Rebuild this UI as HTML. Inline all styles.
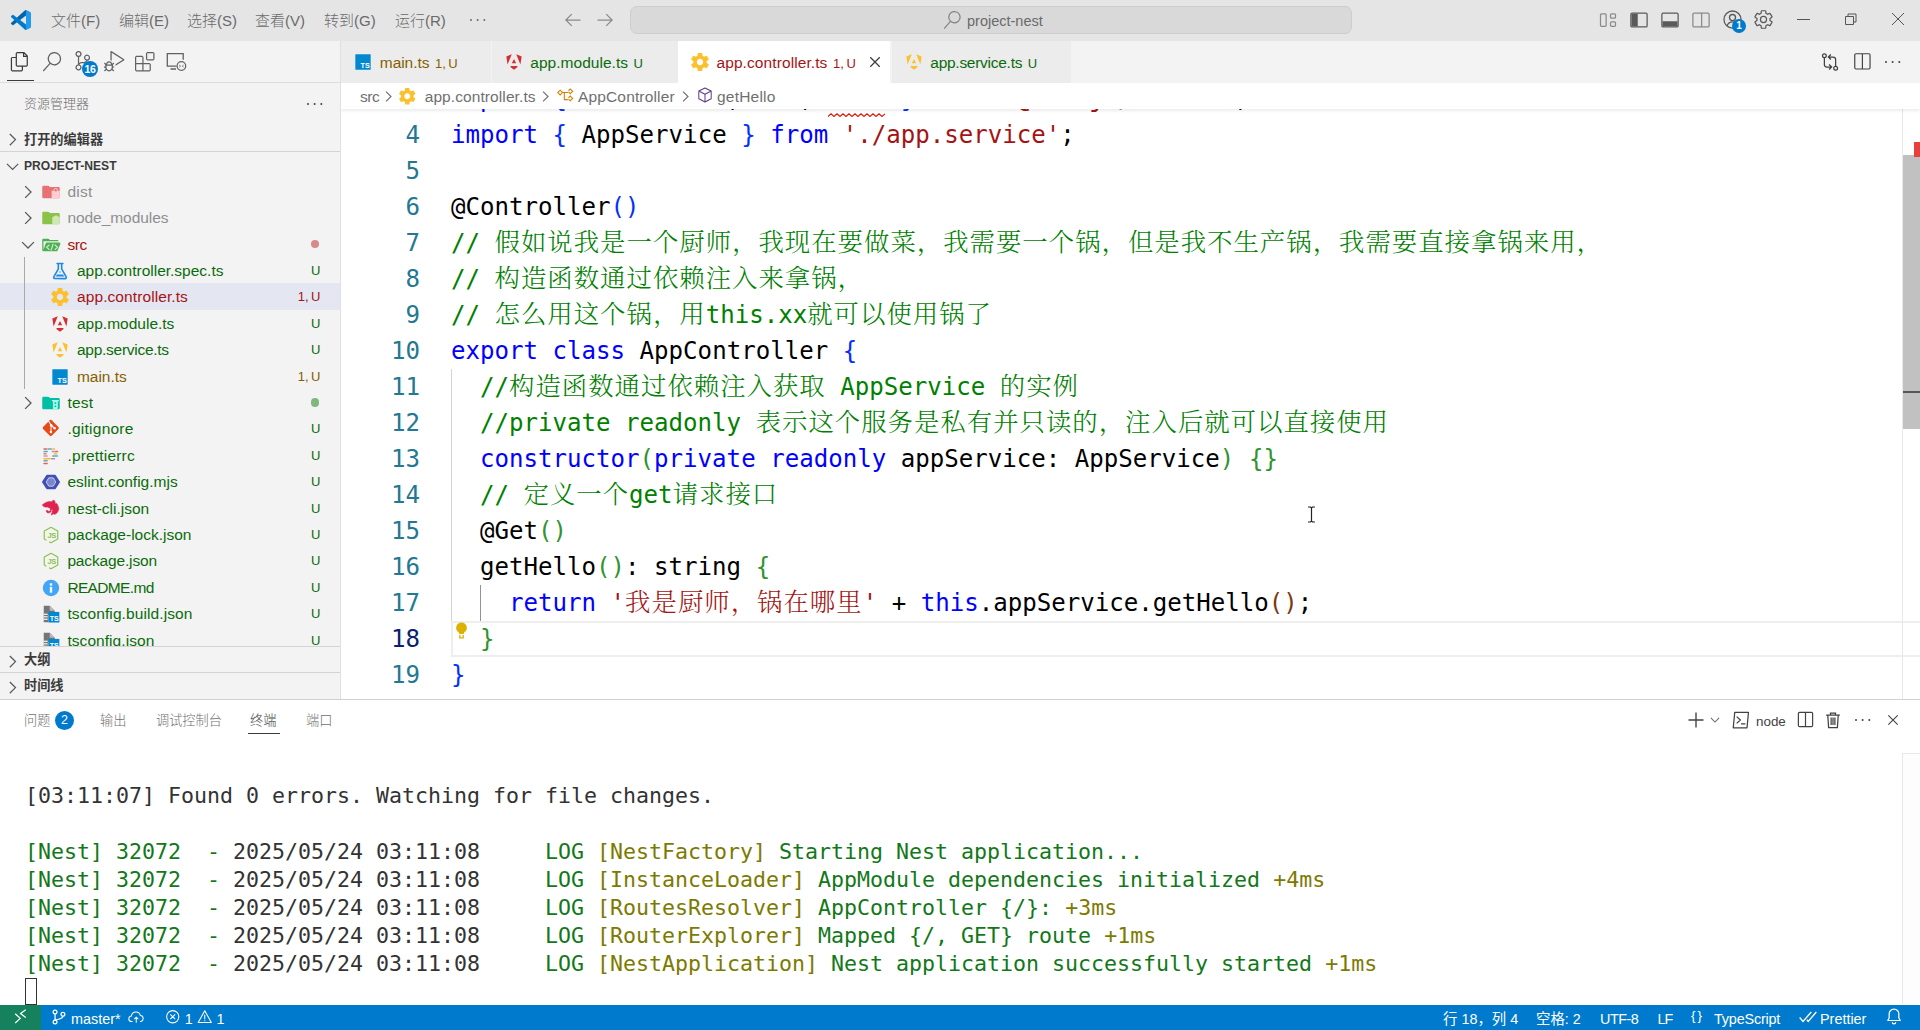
<!DOCTYPE html>
<html lang="zh-CN">
<head>
<meta charset="utf-8">
<title>app.controller.ts - project-nest - Visual Studio Code</title>
<style>
*{box-sizing:border-box;margin:0;padding:0}
html,body{width:1920px;height:1030px;overflow:hidden;background:#fff}
body{position:relative;font-family:"Liberation Sans","Noto Sans CJK SC",sans-serif;font-size:15px;color:#3b3b3b}
.abs{position:absolute}
svg{display:block}
/* ---------- title bar ---------- */
#titlebar{position:absolute;left:0;top:0;width:1920px;height:41px;background:#e5e5e5}
#titlebar .menu{font-weight:300;position:absolute;top:0;height:41px;line-height:41px;font-size:15px;color:#6a6a6a;white-space:nowrap}
#cmd{position:absolute;left:630px;top:6px;width:722px;height:28px;border:1px solid #cdcdcd;border-radius:7px;background:#d9d9d9}
#cmd span{position:absolute;left:336px;top:0;line-height:28.5px;font-size:14.5px;color:#6a6a6a}
/* ---------- side bar ---------- */
#sidebar{position:absolute;left:0;top:41px;width:341px;height:659px;background:#f3f3f3;border-right:1px solid #e0e0e0;overflow:hidden}
#actbar{position:absolute;left:0;top:0;width:340px;height:42px;border-bottom:1px solid #dcdcdc}
.sbtitle{font-weight:300;position:absolute;left:24px;top:53px;font-size:13px;color:#6f6f6f;line-height:20px}
.sechead{position:absolute;left:0;width:340px;height:27px;border-top:1px solid #d4d4d4;font-weight:bold;font-size:13.2px;color:#3b3b3b;line-height:25px;padding-left:24px;white-space:nowrap}
.sechead svg{position:absolute;left:2.500px;top:4.500px}
.row{position:absolute;left:0;width:340px;height:26.4px;line-height:26px;font-size:15.5px;white-space:nowrap}
.row .lbl{position:absolute;top:1px}
.row .bdg{position:absolute;right:19.500px;top:1px;font-size:13px;text-align:right;word-spacing:-1px}
.row .ico{position:absolute;top:4px}
.row .chev{position:absolute;top:4px}
.row.sel{background:#e4e6f1}
.dot{position:absolute;right:21px;top:9px;width:8.500px;height:8.500px;border-radius:50%}
.iguide{position:absolute;width:1px;background:#a9a9a9}
#tree{position:absolute;left:0;top:0;width:340px;height:605px;overflow:hidden}
.g{color:#0b6b0b}.r{color:#a51414}.y{color:#855f00}.ig{color:#8e8e90}
/* ---------- editor ---------- */
#editor{position:absolute;left:341px;top:41px;width:1579px;height:659px;background:#fff;overflow:hidden}
#tabs{position:absolute;left:0;top:0;width:1579px;height:42px;background:#f3f3f3}
.tab{position:absolute;top:0;height:42px;background:#ececec;font-size:15.5px;line-height:41px;white-space:nowrap}
.tab.act{background:#fff}
.tab .ico{position:absolute;top:11px}
.tab .lbl{position:absolute;top:1px}
.tab .bdg{margin-left:5.500px;font-size:13px;word-spacing:-1px}
#crumbs{position:absolute;left:0;top:42px;width:1579px;height:26px;background:#fff;font-size:15.5px;color:#707070;line-height:26px;white-space:nowrap;z-index:3;box-shadow:0 2px 3px rgba(0,0,0,.08)}
#crumbs span{position:absolute;top:1px}
#code{position:absolute;left:0;top:0;width:1579px;font-family:"DejaVu Sans Mono","Liberation Mono","Noto Serif CJK SC",monospace;font-size:24.1px;line-height:36px;color:#000;white-space:pre}
.ln{position:absolute;left:0;height:36px;width:1579px}
.ln .no{position:absolute;left:0;width:79px;text-align:right;color:#237893}
.ln .no.cur{color:#0b216f}
.ln .tx{position:absolute;left:110px}
.k{color:#0000ff}.s{color:#a31515}.c{color:#008000}.b1{color:#0431fa}.b2{color:#319331}.b3{color:#7b3814}
.cj{font-family:"Noto Serif CJK SC",serif;font-size:25.4px;letter-spacing:1px;line-height:0;font-weight:300}
/* ---------- panel ---------- */
#panel{position:absolute;left:0;top:699px;width:1920px;height:306px;background:#fff;border-top:1px solid #d0d0d0;overflow:hidden}
#panel .pt{font-weight:300;position:absolute;top:11px;font-size:13.2px;color:#6f6f6f;line-height:20px;white-space:nowrap}
#term{position:absolute;left:25px;top:82px;font-family:"DejaVu Sans Mono","Liberation Mono",monospace;font-size:21.6px;line-height:28px;color:#333;white-space:pre}
.tg{color:#12781a}.ty{color:#7d7a00}
/* ---------- status bar ---------- */
#status{position:absolute;left:0;top:1005px;width:1920px;height:25px;background:#007acc;color:#fff;font-size:14.4px;line-height:29px;white-space:nowrap}
#status span{position:absolute;top:0}
</style>
</head>
<body>
<!-- TITLEBAR -->
<div id="titlebar">
  <span class="menu" style="left:51px">文件(F)</span>
  <span class="menu" style="left:119px">编辑(E)</span>
  <span class="menu" style="left:187px">选择(S)</span>
  <span class="menu" style="left:255px">查看(V)</span>
  <span class="menu" style="left:324px">转到(G)</span>
  <span class="menu" style="left:395px">运行(R)</span>
  <span class="abs" style="left:468.7px;top:17.8px"><svg width="17.3" height="4" viewBox="0 0 17.3 4"><circle cx="2" cy="2" r="1.0" fill="#6a6a6a"/><circle cx="8.65" cy="2" r="1.0" fill="#6a6a6a"/><circle cx="15.30" cy="2" r="1.0" fill="#6a6a6a"/></svg></span>
  <div id="cmd"><span>project-nest</span></div>
  <!-- vscode logo -->
<span class="abs" style="left:11px;top:10px"><svg width="20" height="20" viewBox="0 0 100 100"><path fill="#0065a9" d="M96.500 10.800L75.900.9a6.200 6.200 0 0 0-7.100 1.200L1.300 63.600a4.200 4.200 0 0 0 0 6.200l5.500 5a4.200 4.200 0 0 0 5.300.2L93.300 13.400c2.700-2.100 6.700-.1 6.700 3.300v-.2a6.200 6.200 0 0 0-3.500-5.700z"/><path fill="#007acc" d="M96.500 89.200l-20.600 9.900a6.200 6.200 0 0 1-7.100-1.200L1.300 36.400a4.200 4.200 0 0 1 0-6.200l5.500-5a4.200 4.200 0 0 1 5.300-.2l81.200 61.600c2.700 2.100 6.700.1 6.700-3.300v.2a6.200 6.200 0 0 1-3.500 5.700z"/><path fill="#1f9cf0" d="M75.900 99.100a6.200 6.200 0 0 1-7.100-1.200c2.300 2.300 6.200.7 6.200-2.600V4.700c0-3.300-3.900-4.900-6.200-2.600A6.200 6.200 0 0 1 75.900.9l20.600 9.900a6.200 6.200 0 0 1 3.500 5.600v67.200a6.200 6.200 0 0 1-3.500 5.600z"/></svg></span>
<!-- nav arrows -->
<span class="abs" style="left:563px;top:10px"><svg width="20" height="20" viewBox="0 0 16 16"><path fill="none" stroke="#8a8a8a" stroke-width="1" d="M14 8H2.500M7 3.300L2.300 8 7 12.700"/></svg></span>
<span class="abs" style="left:595px;top:10px"><svg width="20" height="20" viewBox="0 0 16 16"><path fill="none" stroke="#8a8a8a" stroke-width="1" d="M2 8h11.500M9 3.300L13.700 8 9 12.700"/></svg></span>
<!-- search icon in command center -->
<span class="abs" style="left:943px;top:11px"><svg width="18" height="18" viewBox="0 0 24 24"><path fill="#808080" d="M15.250 0a8.250 8.250 0 0 0-6.180 13.720L1 22.880l1.120 1 8.050-9.120A8.251 8.251 0 1 0 15.250.010V0zm0 15a6.750 6.750 0 1 1 0-13.500 6.750 6.750 0 0 1 0 13.500z"/></svg></span>
<!-- layout controls -->
<span class="abs" style="left:1598px;top:10px"><svg width="20" height="20" viewBox="0 0 16 16"><g fill="none" stroke="#8a8a8a" stroke-width="1"><rect x="2" y="3" width="4.500" height="10" rx=".8"/><rect x="10" y="3" width="4" height="3.500" rx=".8"/><rect x="10" y="9.500" width="4" height="3.500" rx=".8"/></g></svg></span>
<span class="abs" style="left:1629px;top:10px"><svg width="20" height="20" viewBox="0 0 16 16"><rect x="1.500" y="2.500" width="13" height="11" rx="1" fill="none" stroke="#5a5a5a" stroke-width="1"/><rect x="2" y="3" width="5" height="10" fill="#5a5a5a"/></svg></span>
<span class="abs" style="left:1660px;top:10px"><svg width="20" height="20" viewBox="0 0 16 16"><rect x="1.500" y="2.500" width="13" height="11" rx="1" fill="none" stroke="#5a5a5a" stroke-width="1"/><rect x="2" y="9" width="12" height="4" fill="#5a5a5a"/></svg></span>
<span class="abs" style="left:1691px;top:10px"><svg width="20" height="20" viewBox="0 0 16 16"><path fill="none" stroke="#8a8a8a" stroke-width="1" d="M2.500 2.500h11a1 1 0 0 1 1 1v9a1 1 0 0 1-1 1h-11a1 1 0 0 1-1-1v-9a1 1 0 0 1 1-1zM8.500 2.500v11"/></svg></span>
<span class="abs" style="left:1722px;top:9px"><svg width="21" height="21" viewBox="0 0 16 16"><g fill="none" stroke="#5a5a5a" stroke-width="1"><circle cx="8" cy="8" r="6.500"/><circle cx="8" cy="6.500" r="2.300"/><path d="M3.800 12.800c.8-2 2.300-3 4.200-3s3.400 1 4.200 3"/></g></svg></span>
<span class="abs" style="left:1732px;top:19px;width:14px;height:14px;border-radius:7px;background:#007acc;color:#fff;font-size:10px;font-weight:bold;line-height:14px;text-align:center">1</span>
<span class="abs" style="left:1753px;top:9px"><svg width="21" height="21" viewBox="0 0 24 24"><path fill="none" stroke="#5a5a5a" stroke-width="1.400" d="M19.430 12.980c.040-.320.070-.640.070-.980s-.030-.660-.070-.980l2.110-1.650c.190-.150.240-.420.120-.640l-2-3.460c-.120-.220-.390-.300-.610-.220l-2.490 1c-.520-.400-1.080-.730-1.690-.980l-.380-2.650C14.460 2.180 14.250 2 14 2h-4c-.250 0-.460.180-.490.420l-.380 2.650c-.610.250-1.170.590-1.690.980l-2.490-1c-.230-.090-.490 0-.610.220l-2 3.460c-.130.220-.070.490.120.640l2.110 1.650c-.040.320-.070.650-.070.980s.030.660.070.980l-2.110 1.650c-.190.150-.240.420-.120.640l2 3.460c.120.220.390.300.610.220l2.490-1c.520.400 1.080.730 1.690.980l.380 2.650c.030.240.240.420.490.420h4c.250 0 .460-.180.490-.420l.380-2.650c.610-.250 1.170-.590 1.690-.980l2.490 1c.230.090.490 0 .610-.220l2-3.460c.120-.220.070-.490-.120-.640l-2.110-1.650zM12 15.500c-1.930 0-3.500-1.570-3.500-3.500s1.570-3.500 3.500-3.500 3.500 1.570 3.500 3.500-1.570 3.500-3.500 3.500z"/></svg></span>
<!-- window controls -->
<span class="abs" style="left:1797px;top:18.500px;width:13px;height:1px;background:#555"></span>
<span class="abs" style="left:1844px;top:12px"><svg width="14" height="14" viewBox="0 0 14 14"><path fill="none" stroke="#555" stroke-width="1" d="M1.500 4.500h8v8h-8zM4 4.500V2h8v8H9.500"/></svg></span>
<span class="abs" style="left:1891px;top:12px"><svg width="14" height="14" viewBox="0 0 14 14"><path fill="none" stroke="#555" stroke-width="1" d="M1 1l12 12M13 1L1 13"/></svg></span>

</div>
<!-- SIDEBAR -->
<div id="sidebar">
  <div id="actbar"><span class="abs" style="left:10px;top:11px"><svg width="19.5" height="19.5" viewBox="0 0 24 24"><path fill="#3b3b3b" d="M17.5 0h-9L7 1.5V6H2.500L1 7.500v15.070L2.500 24h12.070L16 22.570V18h4.700l1.300-1.430V4.500L17.500 0zm0 2.120l2.380 2.380H17.500V2.120zm-3 20.380h-12v-15H7v9.070L8.500 18h6v4.500zm6-6h-12v-15H16V6h4.500v10.500z"/></svg></span>
<span class="abs" style="left:42px;top:11px"><svg width="19.500" height="19.500" viewBox="0 0 24 24"><path fill="#616161" d="M15.250 0a8.250 8.250 0 0 0-6.180 13.720L1 22.880l1.120 1 8.050-9.120A8.251 8.251 0 1 0 15.250.010V0zm0 15a6.750 6.750 0 1 1 0-13.500 6.750 6.750 0 0 1 0 13.500z"/></svg></span>
<span class="abs" style="left:73px;top:10px"><svg width="19.500" height="19.500" viewBox="0 0 24 24"><path fill="#616161" d="M21.007 8.222A3.738 3.738 0 0 0 15.045 5.200a3.737 3.737 0 0 0 1.156 6.583 2.988 2.988 0 0 1-2.668 1.670h-2.990a4.456 4.456 0 0 0-2.989 1.165V7.400a3.737 3.737 0 1 0-1.494 0v9.117a3.776 3.776 0 1 0 1.816.099 2.990 2.990 0 0 1 2.668-1.667h2.990a4.484 4.484 0 0 0 4.223-3.039 3.736 3.736 0 0 0 3.250-3.687zM4.565 3.738a2.242 2.242 0 1 1 4.484 0 2.242 2.242 0 0 1-4.484 0zm4.484 16.441a2.242 2.242 0 1 1-4.484 0 2.242 2.242 0 0 1 4.484 0zm8.221-9.715a2.242 2.242 0 1 1 0-4.485 2.242 2.242 0 0 1 0 4.485z"/></svg></span>
<span class="abs" style="left:82px;top:20px;width:16px;height:16px;border-radius:8px;background:#007acc;color:#fff;font-size:10.500px;font-weight:bold;line-height:16px;text-align:center;letter-spacing:-.3px">16</span>
<span class="abs" style="left:104px;top:10px"><svg width="20.500" height="20.500" viewBox="0 0 24 24"><path fill="#616161" d="M10.940 13.500l-1.320 1.320a3.730 3.730 0 0 0-7.240 0L1.060 13.500 0 14.560l1.720 1.720-.22.220V18H0v1.500h1.500v.080c.077.489.214.966.410 1.420L0 22.940 1.060 24l1.650-1.650A4.308 4.308 0 0 0 6 24a4.310 4.310 0 0 0 3.290-1.650L10.940 24 12 22.940 10.090 21c.198-.464.336-.951.410-1.450v-.100H12V18h-1.500v-1.500l-.220-.220L12 14.560l-1.060-1.060zM6 13.500a2.250 2.250 0 0 1 2.250 2.250h-4.500A2.250 2.250 0 0 1 6 13.500zm3 6a3.330 3.330 0 0 1-3 3 3.330 3.330 0 0 1-3-3v-2.250h6v2.250zm14.760-9.900v1.260L13.500 17.370V15.600l8.500-5.370L9 2v9.460a5.070 5.070 0 0 0-1.500-.720V.630L8.640 0l15.120 9.600z"/></svg></span>
<span class="abs" style="left:135px;top:11px"><svg width="19.500" height="19.500" viewBox="0 0 24 24"><path fill="#616161" d="M13.500 1.500L15 0h7.500L24 1.500V9l-1.500 1.500H15L13.500 9V1.500zm1.500 0V9h7.500V1.500H15zM0 15V6l1.500-1.500H9L10.500 6v7.500H18l1.500 1.500v7.500L18 24H1.500L0 22.500V15zm9-1.500V6H1.500v7.500H9zM9 15H1.500v7.500H9V15zm1.500 7.500H18V15h-7.500v7.500z"/></svg></span>
<span class="abs" style="left:166px;top:11px"><svg width="21" height="20" viewBox="0 0 21 20"><path fill="none" stroke="#616161" stroke-width="1.300" d="M10.500 14.200H1.300V1.600h15.900v6.200M4.500 17h5.500"/><circle cx="15.400" cy="14" r="4.300" fill="none" stroke="#616161" stroke-width="1.200"/><path fill="none" stroke="#616161" stroke-width=".9" d="M13.300 13.100l1.200 1-1.200 1M17.500 13.100l-1.200 1 1.200 1"/></svg></span>
<span class="abs" style="left:7px;top:38.500px;width:27px;height:1.500px;background:#3b3b3b"></span>
</div>
  <div class="sbtitle">资源管理器</div>
  <div id="tree"><div class="row" style="top:136.8px"><span class="chev" style="left:18px"><svg width="20" height="20" viewBox="0 0 16 16" ><path fill="none" stroke="#5a5a5a" stroke-width="1.050" d="M5.700 3.300L10.400 8l-4.700 4.700"/></svg></span><span class="ico" style="left:40.8px"><svg width="20" height="20" viewBox="0 0 32 32" ><path fill="#e57373" d="M13.844 7.536l-1.288-1.072A2 2 0 0 0 11.276 6H4a2 2 0 0 0-2 2v16a2 2 0 0 0 2 2h24a2 2 0 0 0 2-2V10a2 2 0 0 0-2-2H15.124a2 2 0 0 1-1.28-.464Z"/><path fill="#ffcdd2" d="M17 14h13v10a2 2 0 0 1-2 2H17z"/><path fill="none" stroke="#ffcdd2" stroke-width="1.6" d="M21 14v-1.2a2.5 2.5 0 0 1 5 0V14"/><rect x="22" y="13" width="3" height="2" fill="#e57373"/></svg></span><span class="lbl ig" style="left:67.4px;letter-spacing:0.24px">dist</span></div>
<div class="row" style="top:163.2px"><span class="chev" style="left:18px"><svg width="20" height="20" viewBox="0 0 16 16" ><path fill="none" stroke="#5a5a5a" stroke-width="1.050" d="M5.700 3.300L10.400 8l-4.700 4.700"/></svg></span><span class="ico" style="left:40.8px"><svg width="20" height="20" viewBox="0 0 32 32" ><path fill="#8bc34a" d="M13.844 7.536l-1.288-1.072A2 2 0 0 0 11.276 6H4a2 2 0 0 0-2 2v16a2 2 0 0 0 2 2h24a2 2 0 0 0 2-2V10a2 2 0 0 0-2-2H15.124a2 2 0 0 1-1.28-.464Z"/><path fill="#dcedc8" d="M24 11.5l6 3.4V26H18v-11.1z" opacity=".85"/></svg></span><span class="lbl ig" style="left:67.4px;letter-spacing:-0.05px">node_modules</span></div>
<div class="row" style="top:189.6px"><span class="chev" style="left:17.500px"><svg width="20" height="20" viewBox="0 0 16 16" ><path fill="none" stroke="#5a5a5a" stroke-width="1.050" d="M3.300 5.700L8 10.400l4.700-4.700"/></svg></span><span class="ico" style="left:40.8px"><svg width="20" height="20" viewBox="0 0 32 32" ><path fill="#4caf50" d="M28.967 12H9.442a2 2 0 0 0-1.898 1.368L4 24V10h24a2 2 0 0 0-2-2H15.124a2 2 0 0 1-1.28-.464l-1.288-1.072A2 2 0 0 0 11.276 6H4a2 2 0 0 0-2 2v16a2 2 0 0 0 2 2h22l4.805-11.212A2 2 0 0 0 28.967 12Z"/><path fill="none" stroke="#c8e6c9" stroke-width="2" d="M13.5 15.5l-4.5 4 4.5 4M22 15.5l4.5 4-4.5 4M19.5 14l-3.5 11"/></svg></span><span class="lbl r" style="left:67.4px;letter-spacing:-0.42px">src</span><span class="dot" style="background:#d88a8a"></span></div>
<div class="row" style="top:216.0px"><span class="ico" style="left:50.4px"><svg width="20" height="20" viewBox="0 0 24 24" ><path fill="none" stroke="#1e88e5" stroke-width="1.9" stroke-linejoin="round" stroke-linecap="round" d="M8.500 3h7M10 3.300v6.200L4.600 19a1.400 1.400 0 0 0 1.200 2.100h12.400a1.400 1.400 0 0 0 1.200-2.100L14 9.500V3.300"/><path fill="#1e88e5" d="M8.300 16.200h7.400l1.300 2.500H7z"/><circle cx="12" cy="13.300" r=".9" fill="#1e88e5"/></svg></span><span class="lbl g" style="left:77.0px">app.controller.spec.ts</span><span class="bdg g">U</span></div>
<div class="row sel" style="top:242.4px"><span class="ico" style="left:50.4px"><svg width="20" height="20" viewBox="0.9 0.9 22.2 22.2" ><path fill="#fbc02d" d="M19.43 12.98c.04-.32.07-.64.07-.98s-.03-.66-.07-.98l2.11-1.65c.19-.15.24-.42.12-.64l-2-3.46c-.12-.22-.39-.3-.61-.22l-2.49 1c-.52-.4-1.08-.73-1.69-.98l-.38-2.65C14.46 2.18 14.25 2 14 2h-4c-.25 0-.46.18-.49.42l-.38 2.65c-.61.25-1.17.59-1.69.98l-2.49-1c-.23-.09-.49 0-.61.22l-2 3.46c-.13.22-.07.49.12.64l2.11 1.65c-.04.32-.07.65-.07.98s.03.66.07.98l-2.11 1.65c-.19.15-.24.42-.12.64l2 3.46c.12.22.39.3.61.22l2.49-1c.52.4 1.08.73 1.69.98l.38 2.65c.03.24.24.42.49.42h4c.25 0 .46-.18.49-.42l.38-2.65c.61-.25 1.17-.59 1.69-.98l2.49 1c.23.09.49 0 .61-.22l2-3.46c.12-.22.07-.49-.12-.64l-2.11-1.65zM12 15.5c-1.93 0-3.5-1.57-3.5-3.5s1.57-3.5 3.5-3.5 3.5 1.57 3.5 3.5-1.57 3.5-3.5 3.5z"/></svg></span><span class="lbl r" style="left:77.0px;letter-spacing:0.09px">app.controller.ts</span><span class="bdg r">1, U</span></div>
<div class="row" style="top:268.8px"><span class="ico" style="left:50.4px"><svg width="20" height="20" viewBox="0 0 24 24" ><path fill="#d32f2f" d="M2.800 5.500 9.300 2.600 4.300 14.900zM21.200 5.500 14.700 2.600 19.700 14.900zM12 8.400 9.400 13.500h5.200zM8.100 16.700h7.800l.4 1.200L12 21.200 7.600 17.900z"/></svg></span><span class="lbl g" style="left:77.0px">app.module.ts</span><span class="bdg g">U</span></div>
<div class="row" style="top:295.2px"><span class="ico" style="left:50.4px"><svg width="20" height="20" viewBox="0 0 24 24" ><path fill="#fbc02d" d="M2.800 5.500 9.300 2.600 4.300 14.900zM21.200 5.500 14.700 2.600 19.700 14.900zM12 8.400 9.400 13.500h5.200zM8.100 16.700h7.800l.4 1.200L12 21.200 7.600 17.900z"/></svg></span><span class="lbl g" style="left:77.0px;letter-spacing:-0.27px">app.service.ts</span><span class="bdg g">U</span></div>
<div class="row" style="top:321.6px"><span class="ico" style="left:50.4px"><svg width="20" height="20" viewBox="0 0 24 24" ><rect x="2.800" y="2.800" width="18.400" height="18.400" rx=".5" fill="#0288d1"/><text x="20.200" y="19.400" text-anchor="end" font-family="Liberation Sans,sans-serif" font-weight="bold" font-size="8.800" fill="#fff">TS</text></svg></span><span class="lbl y" style="left:77.0px;letter-spacing:-0.05px">main.ts</span><span class="bdg y">1, U</span></div>
<div class="row" style="top:348.0px"><span class="chev" style="left:18px"><svg width="20" height="20" viewBox="0 0 16 16" ><path fill="none" stroke="#5a5a5a" stroke-width="1.050" d="M5.700 3.300L10.400 8l-4.700 4.700"/></svg></span><span class="ico" style="left:40.8px"><svg width="20" height="20" viewBox="0 0 32 32" ><path fill="#00bfa5" d="M13.844 7.536l-1.288-1.072A2 2 0 0 0 11.276 6H4a2 2 0 0 0-2 2v16a2 2 0 0 0 2 2h24a2 2 0 0 0 2-2V10a2 2 0 0 0-2-2H15.124a2 2 0 0 1-1.28-.464Z"/><path fill="#a7ffeb" d="M17.5 11h11v2.2h-1.6V24a1.9 1.9 0 0 1-1.9 2h-4a1.9 1.9 0 0 1-1.9-2V13.200h-1.600z"/><rect x="21.600" y="15" width="2.800" height="2.600" fill="#00bfa5"/><rect x="21.600" y="20" width="2.800" height="2.600" fill="#00bfa5"/></svg></span><span class="lbl g" style="left:67.4px;letter-spacing:0.2px">test</span><span class="dot" style="background:#7fb87f"></span></div>
<div class="row" style="top:374.4px"><span class="ico" style="left:40.8px"><svg width="20" height="20" viewBox="0 0 24 24" ><rect x="4.400" y="3.500" width="14.600" height="14.600" rx="1.600" transform="rotate(45 11.700 10.800)" fill="#e64a19"/><g stroke="#f3f3f3" stroke-width="1.300" fill="none" stroke-linecap="round"><path d="M8.900 2L12.200 7.500L11.900 15.700M12.200 7.500L16.400 11.100"/></g><circle cx="12.200" cy="7.500" r="1.500" fill="#fff"/><circle cx="11.900" cy="15.700" r="1.500" fill="#fff"/><circle cx="16.400" cy="11.100" r="1.500" fill="#fff"/></svg></span><span class="lbl g" style="left:67.4px;letter-spacing:0.25px">.gitignore</span><span class="bdg g">U</span></div>
<div class="row" style="top:400.8px"><span class="ico" style="left:40.8px"><svg width="20" height="20" viewBox="0 0 20 20" ><rect x="2.3" y="2.25" width="4.3" height="1.500" rx=".7" fill="#ea5e5e"/><rect x="6.6" y="2.25" width="4.4" height="1.500" rx=".7" fill="#56b3b4"/><rect x="11.0" y="2.25" width="3.2" height="1.500" rx=".7" fill="#f7ba3e"/><rect x="2.3" y="4.85" width="4.6" height="1.500" rx=".7" fill="#56b3b4"/><rect x="10.7" y="4.85" width="3.3" height="1.500" rx=".7" fill="#bf85bf"/><rect x="14" y="4.85" width="3.2" height="1.500" rx=".7" fill="#ea5e5e"/><rect x="2.3" y="7.05" width="3.5" height="1.500" rx=".7" fill="#bf85bf"/><rect x="12.6" y="7.05" width="3.8" height="1.500" rx=".7" fill="#f7ba3e"/><rect x="2.3" y="9.30" width="4.6" height="1.500" rx=".7" fill="#ea8e8e"/><rect x="11.0" y="9.30" width="6.2" height="1.500" rx=".7" fill="#56b3b4"/><rect x="2.3" y="11.91" width="7.6" height="1.500" rx=".7" fill="#f7ba3e"/><rect x="9.9" y="11.91" width="4.3" height="1.500" rx=".7" fill="#bf85bf"/><rect x="2.3" y="14.05" width="4.6" height="1.500" rx=".7" fill="#56b3b4"/><rect x="2.3" y="16.65" width="4.6" height="1.500" rx=".7" fill="#ea5e5e"/></svg></span><span class="lbl g" style="left:67.4px;letter-spacing:0.18px">.prettierrc</span><span class="bdg g">U</span></div>
<div class="row" style="top:427.2px"><span class="ico" style="left:40.8px"><svg width="20" height="20" viewBox="0 0 24 24" ><path fill="#3f51b5" d="M7.300 3.400h9.400a1.400 1.400 0 0 1 1.200.7l4.700 7.200a1.400 1.400 0 0 1 0 1.400l-4.700 7.200a1.400 1.400 0 0 1-1.200.7H7.300a1.400 1.400 0 0 1-1.200-.7L1.400 12.700a1.400 1.400 0 0 1 0-1.400l4.700-7.200a1.400 1.400 0 0 1 1.200-.7z"/><path fill="#7986cb" stroke="#e8eaf6" stroke-width=".9" d="M9.300 7h5.400l3 5-3 5H9.300l-3-5z"/></svg></span><span class="lbl g" style="left:67.4px">eslint.config.mjs</span><span class="bdg g">U</span></div>
<div class="row" style="top:453.6px"><span class="ico" style="left:40.8px"><svg width="20" height="20" viewBox="0 0 24 24" ><path fill="#e0234e" stroke="#e0234e" stroke-width=".8" stroke-linejoin="round" d="M1.7 6.9L5.0 4.7L8.4 3.3L12.3 3.2L13.7 3.6L14.0 1.9L15.7 1.6L16.8 3.3L17.1 6.1L18.7 5.3L20.1 7.5L21.3 11.4L20.4 14.8L18.5 17.3L16.2 18.4L14.5 17.6L12.9 19.3L12.3 19.0L13.4 16.2L14.0 13.7L13.4 12.5L11.7 13.7L12.3 15.1L10.1 16.5L7.8 16.7L6.4 15.1L6.4 13.9L7.8 13.7L8.7 14.8L10.1 14.8L11.2 13.7L11.5 12.0L10.1 10.6L7.8 9.7L5.0 9.7L2.8 8.6z"/></svg></span><span class="lbl g" style="left:67.4px">nest-cli.json</span><span class="bdg g">U</span></div>
<div class="row" style="top:480.0px"><span class="ico" style="left:40.8px"><svg width="20" height="20" viewBox="0 0 24 24" ><path fill="none" stroke="#8bc34a" stroke-width="1.400" stroke-linejoin="round" d="M12 2.600l8.100 4.700v9.400L12 21.400l-2.300-1.300M12 2.600L3.900 7.300v9.400l2.600 1.500"/><text x="12.800" y="15.600" text-anchor="middle" font-family="Liberation Sans,sans-serif" font-weight="bold" font-size="9" letter-spacing="-.6" fill="#8bc34a">JS</text></svg></span><span class="lbl g" style="left:67.4px">package-lock.json</span><span class="bdg g">U</span></div>
<div class="row" style="top:506.4px"><span class="ico" style="left:40.8px"><svg width="20" height="20" viewBox="0 0 24 24" ><path fill="none" stroke="#8bc34a" stroke-width="1.400" stroke-linejoin="round" d="M12 2.600l8.100 4.700v9.400L12 21.400l-2.300-1.300M12 2.600L3.900 7.300v9.400l2.600 1.500"/><text x="12.800" y="15.600" text-anchor="middle" font-family="Liberation Sans,sans-serif" font-weight="bold" font-size="9" letter-spacing="-.6" fill="#8bc34a">JS</text></svg></span><span class="lbl g" style="left:67.4px;letter-spacing:-0.15px">package.json</span><span class="bdg g">U</span></div>
<div class="row" style="top:532.8px"><span class="ico" style="left:40.8px"><svg width="20" height="20" viewBox="0 0 24 24" ><circle cx="12" cy="12" r="9.800" fill="#42a5f5"/><rect x="10.600" y="10.600" width="2.800" height="7" fill="#fff"/><rect x="10.600" y="6.400" width="2.800" height="2.700" fill="#fff"/></svg></span><span class="lbl g" style="left:67.4px;letter-spacing:-0.65px">README.md</span><span class="bdg g">U</span></div>
<div class="row" style="top:559.2px"><span class="ico" style="left:40.8px"><svg width="20" height="20" viewBox="0 0 24 24" ><path fill="#757575" d="M3.300 2h7.200l6 6v5H9v9H3.300z"/><path fill="#bdbdbd" d="M10.500 2l6 6h-6z"/><g fill="#f3f3f3"><rect x="3.300" y="11.600" width="4.700" height="1.500"/><rect x="3.300" y="14.600" width="4.700" height="1.500"/><rect x="3.300" y="17.600" width="4.700" height="1.500"/></g><rect x="9" y="9.500" width="13" height="12.700" fill="#0288d1"/><text x="21.300" y="20.300" text-anchor="end" font-family="Liberation Sans,sans-serif" font-weight="bold" font-size="8.500" fill="#fff">TS</text></svg></span><span class="lbl g" style="left:67.4px;letter-spacing:0.1px">tsconfig.build.json</span><span class="bdg g">U</span></div>
<div class="row" style="top:585.6px"><span class="ico" style="left:40.8px"><svg width="20" height="20" viewBox="0 0 24 24" ><path fill="#757575" d="M3.300 2h7.200l6 6v5H9v9H3.300z"/><path fill="#bdbdbd" d="M10.500 2l6 6h-6z"/><g fill="#f3f3f3"><rect x="3.300" y="11.600" width="4.700" height="1.500"/><rect x="3.300" y="14.600" width="4.700" height="1.500"/><rect x="3.300" y="17.600" width="4.700" height="1.500"/></g><rect x="9" y="9.500" width="13" height="12.700" fill="#0288d1"/><text x="21.300" y="20.300" text-anchor="end" font-family="Liberation Sans,sans-serif" font-weight="bold" font-size="8.500" fill="#fff">TS</text></svg></span><span class="lbl g" style="left:67.4px;letter-spacing:0.06px">tsconfig.json</span><span class="bdg g">U</span></div>
<div class="iguide" style="left:24px;top:216.0px;height:132px"></div>
</div>
  <span class="abs" style="left:306.4px;top:61.0px"><svg width="17.3" height="4" viewBox="0 0 17.3 4"><circle cx="2" cy="2" r="1.0" fill="#424242"/><circle cx="8.65" cy="2" r="1.0" fill="#424242"/><circle cx="15.30" cy="2" r="1.0" fill="#424242"/></svg></span>
<div class="sechead" style="top:84.500px;border-top:none;padding-top:1px"><svg width="19.200" height="19.200" viewBox="0 0 16 16"><path fill="none" stroke="#5a5a5a" stroke-width="1.050" d="M5.700 3.300L10.400 8l-4.700 4.700"/></svg>打开的编辑器</div>
<div class="sechead" style="top:110px"><svg width="19.200" height="19.200" viewBox="0 0 16 16"><path fill="none" stroke="#5a5a5a" stroke-width="1.050" d="M3.300 5.700L8 10.400l4.700-4.700"/></svg><span style="display:inline-block;font-size:13.200px;transform:scaleX(.915);transform-origin:0 50%;position:relative;top:1px">PROJECT-NEST</span></div>
<div class="sechead" style="top:605px;background:#f3f3f3"><svg width="19.200" height="19.200" viewBox="0 0 16 16"><path fill="none" stroke="#5a5a5a" stroke-width="1.050" d="M5.700 3.300L10.400 8l-4.700 4.700"/></svg>大纲</div>
<div class="sechead" style="top:631.300px;background:#f3f3f3"><svg width="19.200" height="19.200" viewBox="0 0 16 16"><path fill="none" stroke="#5a5a5a" stroke-width="1.050" d="M5.700 3.300L10.400 8l-4.700 4.700"/></svg>时间线</div>

</div>
<!-- EDITOR -->
<div id="editor">
  <div id="tabs"><div class="tab" style="left:0px;width:149.8px"><span class="ico" style="left:12px"><svg width="20" height="20" viewBox="0 0 24 24" ><rect x="2.800" y="2.800" width="18.400" height="18.400" rx=".5" fill="#0288d1"/><text x="20.200" y="19.400" text-anchor="end" font-family="Liberation Sans,sans-serif" font-weight="bold" font-size="8.800" fill="#fff">TS</text></svg></span><span class="lbl y" style="left:38.800px"><span style="letter-spacing:-0.05px">main.ts</span><span class="bdg">1, U</span></span></div>
<div class="tab" style="left:150.5px;width:186px"><span class="ico" style="left:12px"><svg width="20" height="20" viewBox="0 0 24 24" ><path fill="#d32f2f" d="M2.800 5.500 9.300 2.600 4.300 14.900zM21.200 5.500 14.700 2.600 19.700 14.900zM12 8.400 9.400 13.500h5.200zM8.100 16.700h7.800l.4 1.200L12 21.200 7.600 17.900z"/></svg></span><span class="lbl g" style="left:38.800px"><span style="letter-spacing:0.03px">app.module.ts</span><span class="bdg">U</span></span></div>
<div class="tab act" style="left:336.7px;width:212.8px"><span class="ico" style="left:12px"><svg width="20" height="20" viewBox="0.9 0.9 22.2 22.2" ><path fill="#fbc02d" d="M19.43 12.98c.04-.32.07-.64.07-.98s-.03-.66-.07-.98l2.11-1.65c.19-.15.24-.42.12-.64l-2-3.46c-.12-.22-.39-.3-.61-.22l-2.49 1c-.52-.4-1.08-.73-1.69-.98l-.38-2.65C14.46 2.18 14.25 2 14 2h-4c-.25 0-.46.18-.49.42l-.38 2.65c-.61.25-1.17.59-1.69.98l-2.49-1c-.23-.09-.49 0-.61.22l-2 3.46c-.13.22-.07.49.12.64l2.11 1.65c-.04.32-.07.65-.07.98s.03.66.07.98l-2.11 1.65c-.19.15-.24.42-.12.64l2 3.46c.12.22.39.3.61.22l2.49-1c.52.4 1.08.73 1.69.98l.38 2.65c.03.24.24.42.49.42h4c.25 0 .46-.18.49-.42l.38-2.65c.61-.25 1.17-.59 1.69-.98l2.49 1c.23.09.49 0 .61-.22l2-3.46c.12-.22.07-.49-.12-.64l-2.11-1.65zM12 15.5c-1.93 0-3.5-1.57-3.5-3.5s1.57-3.5 3.5-3.5 3.5 1.57 3.5 3.5-1.57 3.5-3.5 3.5z"/></svg></span><span class="lbl r" style="left:38.800px"><span style="letter-spacing:0.09px">app.controller.ts</span><span class="bdg">1, U</span></span><span class="abs" style="left:188px;top:11.500px"><svg width="18" height="18" viewBox="0 0 16 16"><path fill="none" stroke="#3b3b3b" stroke-width="1.100" d="M3.800 3.800l8.400 8.400M12.200 3.800l-8.400 8.400"/></svg></span></div>
<div class="tab" style="left:550.5px;width:179.5px"><span class="ico" style="left:12px"><svg width="20" height="20" viewBox="0 0 24 24" ><path fill="#fbc02d" d="M2.800 5.500 9.300 2.600 4.300 14.900zM21.200 5.500 14.700 2.600 19.700 14.900zM12 8.400 9.400 13.500h5.200zM8.100 16.700h7.800l.4 1.200L12 21.200 7.600 17.900z"/></svg></span><span class="lbl g" style="left:38.800px"><span style="letter-spacing:-0.27px">app.service.ts</span><span class="bdg">U</span></span></div>
<span class="abs" style="left:1479px;top:11px"><svg width="20" height="20" viewBox="0 0 16 16"><g fill="none" stroke="#424242" stroke-width="1"><circle cx="3.500" cy="3" r="1.500"/><circle cx="12.500" cy="13" r="1.500"/><path d="M3.500 4.500v5.500a2 2 0 0 0 2 2h3.500M7.300 10l2 2-2 2M12.500 11.500V6a2 2 0 0 0-2-2H7M8.700 2l-2 2 2 2"/></g></svg></span>
<span class="abs" style="left:1511.600px;top:10.600px"><svg width="18.800" height="18.800" viewBox="0 0 16 16"><path fill="none" stroke="#424242" stroke-width="1" d="M2.500 1.500h11a1 1 0 0 1 1 1v11a1 1 0 0 1-1 1h-11a1 1 0 0 1-1-1v-11a1 1 0 0 1 1-1zM8 1.500v13"/></svg></span>
<span class="abs" style="left:1543.0px;top:18.7px"><svg width="17.3" height="4" viewBox="0 0 17.3 4"><circle cx="2" cy="2" r="1.0" fill="#424242"/><circle cx="8.65" cy="2" r="1.0" fill="#424242"/><circle cx="15.30" cy="2" r="1.0" fill="#424242"/></svg></span>
</div>
  <div id="crumbs"><span style="left:19px;letter-spacing:-.42px">src</span>
<span style="left:39px;top:5px"><svg width="17" height="17" viewBox="0 0 16 16"><path fill="none" stroke="#6a6a6a" stroke-width="1" d="M5.700 3.300L10.400 8l-4.700 4.700"/></svg></span>
<span style="left:57px;top:4px"><svg width="18.5" height="18.5" viewBox="0.9 0.9 22.2 22.2" ><path fill="#fbc02d" d="M19.43 12.98c.04-.32.07-.64.07-.98s-.03-.66-.07-.98l2.11-1.65c.19-.15.24-.42.12-.64l-2-3.46c-.12-.22-.39-.3-.61-.22l-2.49 1c-.52-.4-1.08-.73-1.69-.98l-.38-2.65C14.46 2.18 14.25 2 14 2h-4c-.25 0-.46.18-.49.42l-.38 2.65c-.61.25-1.17.59-1.69.98l-2.49-1c-.23-.09-.49 0-.61.22l-2 3.46c-.13.22-.07.49.12.64l2.11 1.65c-.04.32-.07.65-.07.98s.03.66.07.98l-2.11 1.65c-.19.15-.24.42-.12.64l2 3.46c.12.22.39.3.61.22l2.49-1c.52.4 1.08.73 1.69.98l.38 2.65c.03.24.24.42.49.42h4c.25 0 .46-.18.49-.42l.38-2.65c.61-.25 1.17-.59 1.69-.98l2.49 1c.23.09.49 0 .61-.22l2-3.46c.12-.22.07-.49-.12-.64l-2.11-1.65zM12 15.5c-1.93 0-3.5-1.57-3.5-3.5s1.57-3.5 3.5-3.5 3.5 1.57 3.5 3.5-1.57 3.5-3.5 3.5z"/></svg></span>
<span style="left:83.700px;letter-spacing:.09px">app.controller.ts</span>
<span style="left:196px;top:5px"><svg width="17" height="17" viewBox="0 0 16 16"><path fill="none" stroke="#6a6a6a" stroke-width="1" d="M5.700 3.300L10.400 8l-4.700 4.700"/></svg></span>
<span style="left:215px;top:2.500px"><svg width="19" height="19" viewBox="0 0 16 16"><path fill="none" stroke="#d67e00" stroke-width=".9" d="M5.500 5.500h4.500M3.500 3.500l2 2-2 2-2-2zM7 5.500v6h3M10.500 4l1.500-1.500 2 2-2 2-1.500-1.500M10.500 10l1.500-1.500 2 2-2 2-1.500-1.500"/></svg></span>
<span style="left:237px;letter-spacing:.15px">AppController</span>
<span style="left:336px;top:5px"><svg width="17" height="17" viewBox="0 0 16 16"><path fill="none" stroke="#6a6a6a" stroke-width="1" d="M5.700 3.300L10.400 8l-4.700 4.700"/></svg></span>
<span style="left:354.500px;top:3px"><svg width="18" height="18" viewBox="0 0 16 16"><path fill="none" stroke="#5e3a8c" stroke-width=".9" stroke-linejoin="round" d="M8 1.800l5.500 2.700v6.800L8 14.200l-5.500-2.900V4.500zM2.500 4.500L8 7.300l5.500-2.800M8 7.300v6.900"/></svg></span>
<span style="left:376px;letter-spacing:.22px">getHello</span>
</div>
  <div id="code"><div class="ln" style="top:40px"><span class="no">3</span><span class="tx"><span class="k">import</span> <span class="b1">{</span> Controller, Get, <span class="sq">Post</span> <span class="b1">}</span> <span class="k">from</span> <span class="s">'@nestjs/common'</span>;</span></div>
<div class="ln" style="top:76px"><span class="no">4</span><span class="tx"><span class="k">import</span> <span class="b1">{</span> AppService <span class="b1">}</span> <span class="k">from</span> <span class="s">'./app.service'</span>;</span></div>
<div class="ln" style="top:112px"><span class="no">5</span><span class="tx"></span></div>
<div class="ln" style="top:148px"><span class="no">6</span><span class="tx">@Controller<span class="b1">()</span></span></div>
<div class="ln" style="top:184px"><span class="no">7</span><span class="tx"><span class="c">// <span class="cj">假如说我是一个厨师，我现在要做菜，我需要一个锅，但是我不生产锅，我需要直接拿锅来用，</span></span></span></div>
<div class="ln" style="top:220px"><span class="no">8</span><span class="tx"><span class="c">// <span class="cj">构造函数通过依赖注入来拿锅，</span></span></span></div>
<div class="ln" style="top:256px"><span class="no">9</span><span class="tx"><span class="c">// <span class="cj">怎么用这个锅，用</span>this.xx<span class="cj">就可以使用锅了</span></span></span></div>
<div class="ln" style="top:292px"><span class="no">10</span><span class="tx"><span class="k">export</span> <span class="k">class</span> AppController <span class="b1">{</span></span></div>
<div class="ln" style="top:328px"><span class="no">11</span><span class="tx">  <span class="c">//<span class="cj">构造函数通过依赖注入获取</span> AppService <span class="cj">的实例</span></span></span></div>
<div class="ln" style="top:364px"><span class="no">12</span><span class="tx">  <span class="c">//private readonly <span class="cj">表示这个服务是私有并只读的，注入后就可以直接使用</span></span></span></div>
<div class="ln" style="top:400px"><span class="no">13</span><span class="tx">  <span class="k">constructor</span><span class="b2">(</span><span class="k">private</span> <span class="k">readonly</span> appService: AppService<span class="b2">)</span> <span class="b2">{}</span></span></div>
<div class="ln" style="top:436px"><span class="no">14</span><span class="tx">  <span class="c">// <span class="cj">定义一个</span>get<span class="cj">请求接口</span></span></span></div>
<div class="ln" style="top:472px"><span class="no">15</span><span class="tx">  @Get<span class="b2">()</span></span></div>
<div class="ln" style="top:508px"><span class="no">16</span><span class="tx">  getHello<span class="b2">()</span>: string <span class="b2">{</span></span></div>
<div class="ln" style="top:544px"><span class="no">17</span><span class="tx">    <span class="k">return</span> <span class="s">'<span class="cj">我是厨师，锅在哪里</span>'</span> + <span class="k">this</span>.appService.getHello<span class="b3">()</span>;</span></div>
<div class="ln" style="top:580px"><span class="no cur">18</span><span class="tx">  <span class="b2">}</span></span></div>
<div class="ln" style="top:616px"><span class="no">19</span><span class="tx"><span class="b1">}</span></span></div>
</div>
  <!-- indent guides -->
<div class="abs" style="left:110px;top:328px;width:1px;height:288px;background:#d3d3d3"></div>
<div class="abs" style="left:139px;top:544px;width:1px;height:36.500px;background:#939393"></div>
<!-- current line -->
<div class="abs" style="left:110px;top:580px;width:1469px;height:36px;border:2px solid #eeeeee;border-right:none"></div>
<!-- lightbulb -->
<span class="abs" style="left:111.600px;top:580px"><svg width="17" height="20" viewBox="0 0 17 20"><path fill="#ddb100" d="M8.500 1.500a5.300 5.300 0 0 0-3.100 9.600c.5.400.8 1 .8 1.600v.3h4.600v-.3c0-.6.300-1.200.8-1.600A5.300 5.300 0 0 0 8.500 1.500z"/><path fill="none" stroke="#ddb100" stroke-width="1.300" d="M6.800 14v2.800h3.400V14"/></svg></span>
<!-- squiggle for line 3 -->
<span class="abs" style="left:487px;top:71.500px"><svg width="58" height="5" viewBox="0 0 58 5"><path fill="none" stroke="#e51400" stroke-width="1.100" d="M0 3.5L3 0.8L6 3.5L9 0.8L12 3.5L15 0.8L18 3.5L21 0.8L24 3.5L27 0.8L30 3.5L33 0.8L36 3.5L39 0.8L42 3.5L45 0.8L48 3.5L51 0.8L54 3.5L57 0.8"/></svg></span>
<!-- scrollbar / overview ruler -->
<div class="abs" style="left:1561px;top:68px;width:1px;height:591px;background:#e8e8e8"></div>
<div class="abs" style="left:1562px;top:114px;width:17px;height:274px;background:#c1c1c1"></div>
<div class="abs" style="left:1562px;top:350px;width:17px;height:2px;background:#555"></div>
<div class="abs" style="left:1573px;top:101px;width:6px;height:15px;background:#e8413d"></div>
<!-- mouse i-beam -->
<span class="abs" style="left:966px;top:465px"><svg width="9" height="17" viewBox="0 0 9 17"><path fill="none" stroke="#222" stroke-width="1.200" d="M1 1h2.500l1 1 1-1H8M4.500 2v13M1 16h2.500l1-1 1 1H8"/></svg></span>

</div>
<!-- PANEL -->
<div id="panel">
  <span class="pt" style="left:24px">问题</span>
<span class="abs" style="left:55px;top:11px;width:19px;height:19px;border-radius:10px;background:#007acc;color:#fff;font-size:12.500px;line-height:19px;text-align:center">2</span>
<span class="pt" style="left:100px">输出</span>
<span class="pt" style="left:156px">调试控制台</span>
<span class="pt" style="left:250px;color:#3b3b3b">终端</span>
<span class="abs" style="left:248px;top:32.500px;width:32px;height:1.500px;background:#3b3b3b"></span>
<span class="pt" style="left:306px">端口</span>
<span class="abs" style="left:1686px;top:10px"><svg width="20" height="20" viewBox="0 0 16 16"><path fill="none" stroke="#424242" stroke-width="1.100" d="M8 2v12M2 8h12"/></svg></span>
<span class="abs" style="left:1708px;top:13px"><svg width="14" height="14" viewBox="0 0 16 16"><path fill="none" stroke="#6a6a6a" stroke-width="1.200" d="M3.300 5.700L8 10.400l4.700-4.700"/></svg></span>
<span class="abs" style="left:1731px;top:10px"><svg width="20" height="20" viewBox="0 0 16 16"><path fill="none" stroke="#424242" stroke-width="1" stroke-linejoin="round" d="M3 1.800h11l-1.200 12.400H1.800zM4.500 5.300l3 2.700-3 2.700M8 11h3.500"/></svg></span>
<span class="pt" style="left:1756px;top:12px;font-size:13.400px;color:#424242">node</span>
<span class="abs" style="left:1795.700px;top:10.100px"><svg width="19" height="19" viewBox="0 0 16 16"><path fill="none" stroke="#424242" stroke-width="1" d="M3 2h10a1 1 0 0 1 1 1v10a1 1 0 0 1-1 1H3a1 1 0 0 1-1-1V3a1 1 0 0 1 1-1zM8 2v12"/></svg></span>
<span class="abs" style="left:1823px;top:10px"><svg width="20" height="20" viewBox="0 0 16 16"><path fill="none" stroke="#424242" stroke-width="1" d="M2.500 4h11M6 4V2.500h4V4M3.800 4l.7 10h7l.7-10M6.500 6v6M8 6v6M9.500 6v6"/></svg></span>
<span class="abs" style="left:1853.8px;top:18.2px"><svg width="17.3" height="4" viewBox="0 0 17.3 4"><circle cx="2" cy="2" r="1.0" fill="#424242"/><circle cx="8.65" cy="2" r="1.0" fill="#424242"/><circle cx="15.30" cy="2" r="1.0" fill="#424242"/></svg></span>
<span class="abs" style="left:1884.500px;top:12px"><svg width="16" height="16" viewBox="0 0 16 16"><path fill="none" stroke="#424242" stroke-width="1.100" d="M3.300 3.300l9.400 9.400M12.700 3.300l-9.400 9.400"/></svg></span>
<!-- terminal scrollbar gutter -->
<div class="abs" style="left:1902px;top:53px;width:18px;height:251px;border-left:1px solid #e8e8e8;border-top:1px solid #e8e8e8;background:#fdfdfd"></div>
<!-- cursor -->
<div class="abs" style="left:24.500px;top:277.500px;width:12px;height:27.500px;border:1px solid #333"></div>

  <div id="term">[03:11:07] Found 0 errors. Watching for file changes.

<span class="tg">[Nest] 32072  - </span>2025/05/24 03:11:08     <span class="tg">LOG</span> <span class="ty">[NestFactory]</span> <span class="tg">Starting Nest application...</span>
<span class="tg">[Nest] 32072  - </span>2025/05/24 03:11:08     <span class="tg">LOG</span> <span class="ty">[InstanceLoader]</span> <span class="tg">AppModule dependencies initialized</span> <span class="ty">+4ms</span>
<span class="tg">[Nest] 32072  - </span>2025/05/24 03:11:08     <span class="tg">LOG</span> <span class="ty">[RoutesResolver]</span> <span class="tg">AppController {/}:</span> <span class="ty">+3ms</span>
<span class="tg">[Nest] 32072  - </span>2025/05/24 03:11:08     <span class="tg">LOG</span> <span class="ty">[RouterExplorer]</span> <span class="tg">Mapped {/, GET} route</span> <span class="ty">+1ms</span>
<span class="tg">[Nest] 32072  - </span>2025/05/24 03:11:08     <span class="tg">LOG</span> <span class="ty">[NestApplication]</span> <span class="tg">Nest application successfully started</span> <span class="ty">+1ms</span></div>
</div>
<!-- STATUS -->
<div id="status"><span style="left:0;width:41px;height:25px;background:#16825d"></span>
<span style="left:12px;top:4px"><svg width="18" height="18" viewBox="0 0 16 16"><path fill="none" stroke="#fff" stroke-width="1.100" d="M2.850 4.200L7.300 8.300L2.850 12.400M12.200 0.600L7.600 4.100L12.200 7.600"/></svg></span>
<span style="left:49.900px;top:3px"><svg width="18" height="18" viewBox="0 0 16 16"><g fill="none" stroke="#fff" stroke-width="1.100"><circle cx="4.500" cy="3.500" r="1.700"/><circle cx="4.500" cy="12.500" r="1.700"/><circle cx="11.500" cy="5.500" r="1.700"/><path d="M4.500 5.200v5.600M11.500 7.200c0 2.500-3 2.300-7 3.800"/></g></svg></span>
<span style="left:71px">master*</span>
<span style="left:128.400px;top:5px"><svg width="16.500" height="14.700" viewBox="0 0 18 16"><g fill="none" stroke="#fff" stroke-width="1.100"><path d="M5 12.500H4a3 3 0 0 1-.3-6A5 5 0 0 1 13.500 6a3.300 3.300 0 0 1 .5 6.500h-1"/><path d="M9 14V8M6.800 10L9 7.800l2.200 2.200"/></g></svg></span>
<span style="left:164.500px;top:4.200px"><svg width="15.500" height="15.500" viewBox="0 0 16 16"><g fill="none" stroke="#fff" stroke-width="1.100"><circle cx="8" cy="8" r="6.300"/><path d="M5.500 5.500l5 5M10.500 5.500l-5 5"/></g></svg></span>
<span style="left:184.700px">1</span>
<span style="left:196.700px;top:3.700px"><svg width="15.500" height="15.500" viewBox="0 0 16 16"><g fill="none" stroke="#fff" stroke-width="1.100" stroke-linejoin="round"><path d="M8 1.800L14.800 14H1.200z"/><path d="M8 6v4.500M8 11.500v1.200"/></g></svg></span>
<span style="left:216.500px">1</span>
<span style="left:1443px">行 18，列 4</span>
<span style="left:1536px">空格: 2</span>
<span style="left:1600px;letter-spacing:-.5px">UTF-8</span>
<span style="left:1657.500px;letter-spacing:-1px">LF</span>
<span style="left:1691px;top:-4px;font-size:13.500px;letter-spacing:2px">{}</span>
<span style="left:1714px;letter-spacing:-.18px">TypeScript</span>
<span style="left:1798px;top:3px"><svg width="20" height="18" viewBox="0 0 18 16"><path fill="none" stroke="#fff" stroke-width="1.200" d="M1.500 8.500l3 3.500L12 3.500M8 10.500l1.200 1.500L16.500 3.500"/></svg></span>
<span style="left:1820px">Prettier</span>
<span style="left:1885px;top:1.500px"><svg width="18" height="18" viewBox="0 0 16 16"><path fill="none" stroke="#fff" stroke-width="1.100" stroke-linejoin="round" d="M8 1.800a4.300 4.300 0 0 0-4.300 4.300v3.400L2.500 12h11l-1.200-2.500V6.100A4.300 4.300 0 0 0 8 1.800zM6.500 13.500a1.500 1.500 0 0 0 3 0"/></svg></span>
</div>
</body>
</html>
